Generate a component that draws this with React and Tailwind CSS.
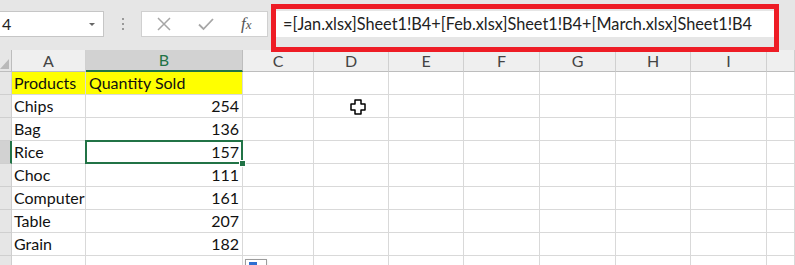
import React from 'react';

const cols = ['A', 'B', 'C', 'D', 'E', 'F', 'G', 'H', 'I', ''];

const rows = [
  ['Products', 'Quantity Sold'],
  ['Chips', '254'],
  ['Bag', '136'],
  ['Rice', '157'],
  ['Choc', '111'],
  ['Computer', '161'],
  ['Table', '207'],
  ['Grain', '182'],
  ['', ''],
];

const font = { fontFamily: 'Lato, "Liberation Sans", sans-serif' };

const Cursor = () => (
  <svg width="16" height="16" viewBox="0 0 16 16" className="absolute left-[36px] top-[4px]">
    <path
      d="M5 1h6v4h4v6h-4v4h-6v-4h-4v-6h4z"
      fill="#fff"
      stroke="#000"
      strokeWidth="1.5"
      strokeLinejoin="round"
    />
  </svg>
);

const App = () => {
  return (
    <div className="w-[795px] h-[265px] overflow-hidden bg-white relative" style={font}>
      {/* toolbar */}
      <div className="h-[50px] bg-[#e6e6e6] flex items-start pt-[11px]">
        <div className="w-[104px] h-[26px] bg-white border border-[#c6c6c6] border-l-0 flex items-center justify-between pl-[2px] pr-[8px]">
          <span className="text-[16px] text-[#222]">4</span>
          <span className="w-0 h-0 border-l-[3px] border-r-[3px] border-t-[3px] border-l-transparent border-r-transparent border-t-[#666]" />
        </div>
        <div className="w-[37px] h-[26px] flex flex-col items-center justify-center gap-[3px]">
          <span className="w-[2px] h-[2px] bg-[#999]" />
          <span className="w-[2px] h-[2px] bg-[#999]" />
          <span className="w-[2px] h-[2px] bg-[#999]" />
        </div>
        <div className="w-[127px] h-[26px] bg-white border border-[#d0d0d0] flex items-center">
          <svg width="14" height="14" viewBox="0 0 14 14" className="ml-[15px]">
            <path d="M1 1L13 13M13 1L1 13" stroke="#a6a6a6" strokeWidth="1.5" />
          </svg>
          <svg width="16" height="14" viewBox="0 0 16 14" className="ml-[27px]">
            <path d="M1 7.5L5.5 12L15 2" stroke="#a6a6a6" strokeWidth="1.8" fill="none" />
          </svg>
          <span className="ml-[27px] text-[17px] italic text-[#555]" style={{ fontFamily: '"Liberation Serif", serif' }}>
            f<span className="text-[13px]">x</span>
          </span>
        </div>
        <div className="ml-[4px] w-[505px] h-[26px] bg-white flex items-center pl-[11px]">
          <span className="text-[16.3px] text-[#222] whitespace-nowrap">
            =[Jan.xlsx]Sheet1!B4+[Feb.xlsx]Sheet1!B4+[March.xlsx]Sheet1!B4
          </span>
        </div>
      </div>

      {/* sheet */}
      <div className="grid grid-cols-[12px_74px_157px_71px_75px_75px_76px_76px_75px_76px_1fr] grid-rows-[22px_repeat(9,23px)]">
        <div className="bg-[#e6e6e6] border-r border-b border-[#bdbdbd] relative">
          <svg width="10" height="12" viewBox="0 0 10 12" className="absolute left-0 bottom-[2px]">
            <path d="M0 12L9 12L9 2Z" fill="#b9b9b9" />
          </svg>
        </div>
        {cols.map((c) =>
          c === 'B' ? (
            <div
              key={c}
              className="bg-[#d2d2d2] border-r border-[#bdbdbd] border-b-2 border-b-[#217346] flex items-center justify-center text-[16px] text-[#217346]"
            >
              {c}
            </div>
          ) : (
            <div
              key={c || 'J'}
              className="bg-[#efefef] border-r border-b border-[#d0d0d0] border-b-[#bdbdbd] flex items-center justify-center text-[16px] text-[#444]"
            >
              {c}
            </div>
          )
        )}

        {rows.map((r, i) => (
          <React.Fragment key={i}>
            <div
              className={`border-r border-b border-[#cfcfcf] ${
                i === 3 ? 'bg-[#d2d2d2] border-r-2 border-r-[#217346]' : 'bg-[#e6e6e6]'
              }`}
            />
            <div
              className={`border-r border-b border-[#d9d9d9] flex items-center pl-[2px] text-[16px] text-[#111] whitespace-nowrap ${
                i === 0 ? 'bg-[#ffff00]' : ''
              }`}
            >
              {r[0]}
            </div>
            <div
              className={`relative border-r border-b border-[#d9d9d9] flex items-center text-[16px] text-[#111] whitespace-nowrap ${
                i === 0 ? 'bg-[#ffff00] pl-[3px]' : 'justify-end pr-[3px]'
              } ${i === 3 ? 'z-10' : ''}`}
            >
              {r[1]}
              {i === 3 && (
                <>
                  <span className="absolute -left-px -top-px -right-px -bottom-px border-2 border-[#217346]" />
                  <span className="absolute -right-[4px] -bottom-[4px] w-[7px] h-[7px] bg-[#217346] border border-white" />
                </>
              )}
            </div>
            {cols.slice(2).map((c, j) => (
              <div key={j} className="relative border-r border-b border-[#d9d9d9]">
                {i === 1 && j === 1 && <Cursor />}
                {i === 8 && j === 0 && (
                  <span className="absolute left-[2px] top-[3px] w-[22px] h-[16px] bg-white border border-[#9c9c9c] shadow-sm">
                    <span className="absolute left-[3px] top-[2px] w-[8px] h-[6px] bg-[#2e6fd1]" />
                  </span>
                )}
              </div>
            ))}
          </React.Fragment>
        ))}
      </div>

      {/* highlight box */}
      <div className="absolute left-[271px] top-[4px] w-[508px] h-[48px] border-[5px] border-[#ee1c25]" />
    </div>
  );
};

export default App;
